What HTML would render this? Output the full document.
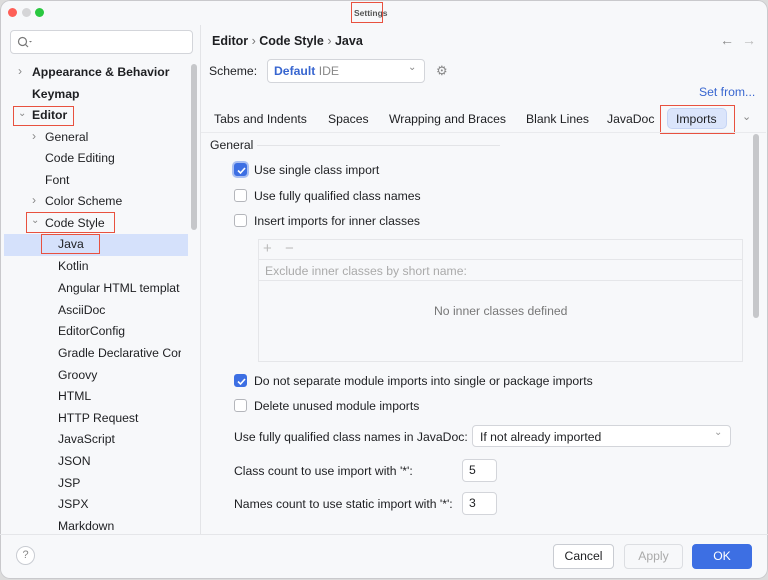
<!DOCTYPE html>
<html><head><meta charset="utf-8"><style>
*{box-sizing:border-box;margin:0;padding:0}
body{width:768px;height:580px;background:#dcdcdc;font-family:"Liberation Sans",sans-serif;font-size:12.2px;color:#1e1f22;position:relative;overflow:hidden}
.win{position:absolute;left:0;top:0;width:768px;height:579px;background:#f7f8fa;box-shadow:inset 0 0 0 1px #c9c9cc;border-radius:10px;overflow:hidden}
.a{position:absolute;white-space:nowrap}
.red{position:absolute;border:1.5px solid #e8513f}
.dot{position:absolute;top:8px;width:9px;height:9px;border-radius:50%}
.cb{position:absolute;width:13px;height:13px;border:1px solid #b4b6bb;border-radius:3px;background:#fff}
.cb.on{background:#3d6fe3;border-color:#3d6fe3}
.cb.on svg{position:absolute;left:1px;top:1px}
.tree div{position:absolute;white-space:nowrap}
.btn{position:absolute;top:544px;height:25px;border:1px solid #c9ccd2;border-radius:4px;background:#fff;text-align:center;line-height:23px}
.inp{position:absolute;background:#fff;border:1px solid #d3d5da;border-radius:4px}
</style></head><body>
<div class="win">
<div class="dot" style="left:8px;background:#fe5f57"></div>
<div class="dot" style="left:22px;background:#d5d5d7"></div>
<div class="dot" style="left:35px;background:#2ac840"></div>
<div class="a" style="left:354px;top:8px;font-size:8.5px;font-weight:bold;color:#555">Settings</div>
<div class="red" style="left:351px;top:2px;width:32px;height:21px"></div>

<!-- left -->
<div class="inp" style="left:10px;top:30px;width:183px;height:24px"></div>
<svg class="a" style="left:17px;top:36px" width="16" height="12"><circle cx="5.5" cy="5.5" r="4" fill="none" stroke="#777" stroke-width="1.2"/><line x1="8.5" y1="8.5" x2="11" y2="11" stroke="#777" stroke-width="1.2"/><path d="M12 5l1.5 1.5 1.5-1.5z" fill="#777"/></svg>
<div style="position:absolute;left:200px;top:25px;width:1px;height:510px;background:#e3e4e7"></div>
<div style="position:absolute;left:4px;top:234px;width:184px;height:22px;background:#d5e1fb"></div>
<div style="position:absolute;left:191px;top:64px;width:6px;height:166px;border-radius:3px;background:#c6c7ca"></div>
<div class="tree">
<div style="left:18px;top:64px;color:#888">›</div>
<div style="left:32px;top:65px;font-weight:bold">Appearance &amp; Behavior</div>
<div style="left:32px;top:87px;font-weight:bold">Keymap</div>
<div style="left:18px;top:108px;color:#888;font-size:10px">⌄</div>
<div style="left:32px;top:108px;font-weight:bold">Editor</div>
<div style="left:32px;top:129px;color:#888">›</div>
<div style="left:45px;top:130px">General</div>
<div style="left:45px;top:151px">Code Editing</div>
<div style="left:45px;top:173px">Font</div>
<div style="left:32px;top:193px;color:#888">›</div>
<div style="left:45px;top:194px">Color Scheme</div>
<div style="left:31px;top:215px;color:#888;font-size:10px">⌄</div>
<div style="left:45px;top:216px">Code Style</div>
<div style="left:58px;top:237px">Java</div>
<div style="left:58px;top:259px">Kotlin</div>
<div style="left:58px;top:281px">Angular HTML templat</div>
<div style="left:58px;top:303px">AsciiDoc</div>
<div style="left:58px;top:324px">EditorConfig</div>
<div style="left:58px;top:346px;width:123px;overflow:hidden">Gradle Declarative Cor</div>
<div style="left:58px;top:368px">Groovy</div>
<div style="left:58px;top:389px">HTML</div>
<div style="left:58px;top:411px">HTTP Request</div>
<div style="left:58px;top:432px">JavaScript</div>
<div style="left:58px;top:454px">JSON</div>
<div style="left:58px;top:476px">JSP</div>
<div style="left:58px;top:497px">JSPX</div>
<div style="left:58px;top:519px">Markdown</div>
</div>
<div class="red" style="left:13px;top:106px;width:61px;height:20px"></div>
<div class="red" style="left:26px;top:212px;width:89px;height:21px"></div>
<div class="red" style="left:41px;top:234px;width:59px;height:20px"></div>

<!-- right header -->
<div class="a" style="left:212px;top:34px;font-weight:bold;font-size:12.5px">Editor <span style="font-weight:normal;color:#777">›</span> Code Style <span style="font-weight:normal;color:#777">›</span> Java</div>
<div class="a" style="left:720px;top:32px;color:#888;font-size:14px">←</div>
<div class="a" style="left:742px;top:32px;color:#bbb;font-size:14px">→</div>
<div class="a" style="left:209px;top:64px">Scheme:</div>
<div class="inp" style="left:267px;top:59px;width:158px;height:24px"></div>
<div class="a" style="left:274px;top:64px;color:#3866d0;font-weight:bold">Default <span style="font-weight:normal;color:#888">IDE</span></div>
<div class="a" style="left:408px;top:62px;color:#888;font-size:10px">⌄</div>
<div class="a" style="left:436px;top:63px;color:#888;font-size:13px">⚙</div>
<div class="a" style="left:699px;top:85px;color:#3866d0">Set from...</div>
<div class="a" style="left:214px;top:112px">Tabs and Indents</div>
<div class="a" style="left:328px;top:112px">Spaces</div>
<div class="a" style="left:389px;top:112px">Wrapping and Braces</div>
<div class="a" style="left:526px;top:112px">Blank Lines</div>
<div class="a" style="left:607px;top:112px">JavaDoc</div>
<div style="position:absolute;left:667px;top:108px;width:60px;height:21px;background:#dbe5fb;border:1px solid #c5d4f5;border-radius:5px"></div>
<div class="a" style="left:676px;top:112px">Imports</div>
<div class="red" style="left:660px;top:105px;width:75px;height:29px"></div>
<div class="a" style="left:742px;top:110px;color:#888;font-size:11px">⌄</div>
<div style="position:absolute;left:201px;top:132px;width:565px;height:1px;background:#e9eaed"></div>
<div style="position:absolute;left:753px;top:134px;width:6px;height:184px;border-radius:3px;background:#c6c7ca"></div>

<div class="a" style="left:210px;top:138px">General</div>
<div style="position:absolute;left:257px;top:145px;width:243px;height:1px;background:#e3e4e7"></div>

<div class="cb on" style="left:234px;top:163px;box-shadow:0 0 0 2px #a9bff2"><svg width="11" height="11"><path d="M2 5.5l2.5 2.5 4.5-5" fill="none" stroke="#fff" stroke-width="1.6"/></svg></div>
<div class="a" style="left:254px;top:163px">Use single class import</div>
<div class="cb" style="left:234px;top:189px"></div>
<div class="a" style="left:254px;top:189px">Use fully qualified class names</div>
<div class="cb" style="left:234px;top:214px"></div>
<div class="a" style="left:254px;top:214px">Insert imports for inner classes</div>

<div style="position:absolute;left:258px;top:239px;width:485px;height:123px;border:1px solid #e5e6e9;background:#f7f8fa"></div>
<div style="position:absolute;left:259px;top:259px;width:483px;height:1px;background:#e5e6e9"></div>
<div style="position:absolute;left:259px;top:280px;width:483px;height:1px;background:#e5e6e9"></div>
<div class="a" style="left:263px;top:240px;color:#bbb;font-size:15px">+</div>
<div class="a" style="left:285px;top:240px;color:#bbb;font-size:15px">−</div>
<div class="a" style="left:265px;top:264px;color:#aaa">Exclude inner classes by short name:</div>
<div class="a" style="left:434px;top:304px;color:#777">No inner classes defined</div>

<div class="cb on" style="left:234px;top:374px"><svg width="11" height="11"><path d="M2 5.5l2.5 2.5 4.5-5" fill="none" stroke="#fff" stroke-width="1.6"/></svg></div>
<div class="a" style="left:254px;top:374px">Do not separate module imports into single or package imports</div>
<div class="cb" style="left:234px;top:399px"></div>
<div class="a" style="left:254px;top:399px">Delete unused module imports</div>

<div class="a" style="left:234px;top:430px">Use fully qualified class names in JavaDoc:</div>
<div class="inp" style="left:472px;top:425px;width:259px;height:22px"></div>
<div class="a" style="left:480px;top:430px">If not already imported</div>
<div class="a" style="left:714px;top:427px;color:#999;font-size:10px">⌄</div>
<div class="a" style="left:234px;top:464px">Class count to use import with '*':</div>
<div class="inp" style="left:462px;top:459px;width:35px;height:23px"></div>
<div class="a" style="left:469px;top:463px">5</div>
<div class="a" style="left:234px;top:497px">Names count to use static import with '*':</div>
<div class="inp" style="left:462px;top:492px;width:35px;height:23px"></div>
<div class="a" style="left:469px;top:496px">3</div>

<!-- bottom -->
<div style="position:absolute;left:0;top:534px;width:768px;height:1px;background:#e5e6e9"></div>
<div style="position:absolute;left:16px;top:546px;width:19px;height:19px;border:1px solid #c9ccd2;border-radius:50%;background:#fff;text-align:center;line-height:17px;color:#888;font-size:11px">?</div>
<div class="btn" style="left:553px;width:61px">Cancel</div>
<div class="btn" style="left:624px;width:59px;color:#aaa;background:#f7f8fa;border-color:#dcdee2">Apply</div>
<div class="btn" style="left:692px;width:60px;background:#3d6fe3;border-color:#3d6fe3;color:#fff">OK</div>
</div>
</body></html>
